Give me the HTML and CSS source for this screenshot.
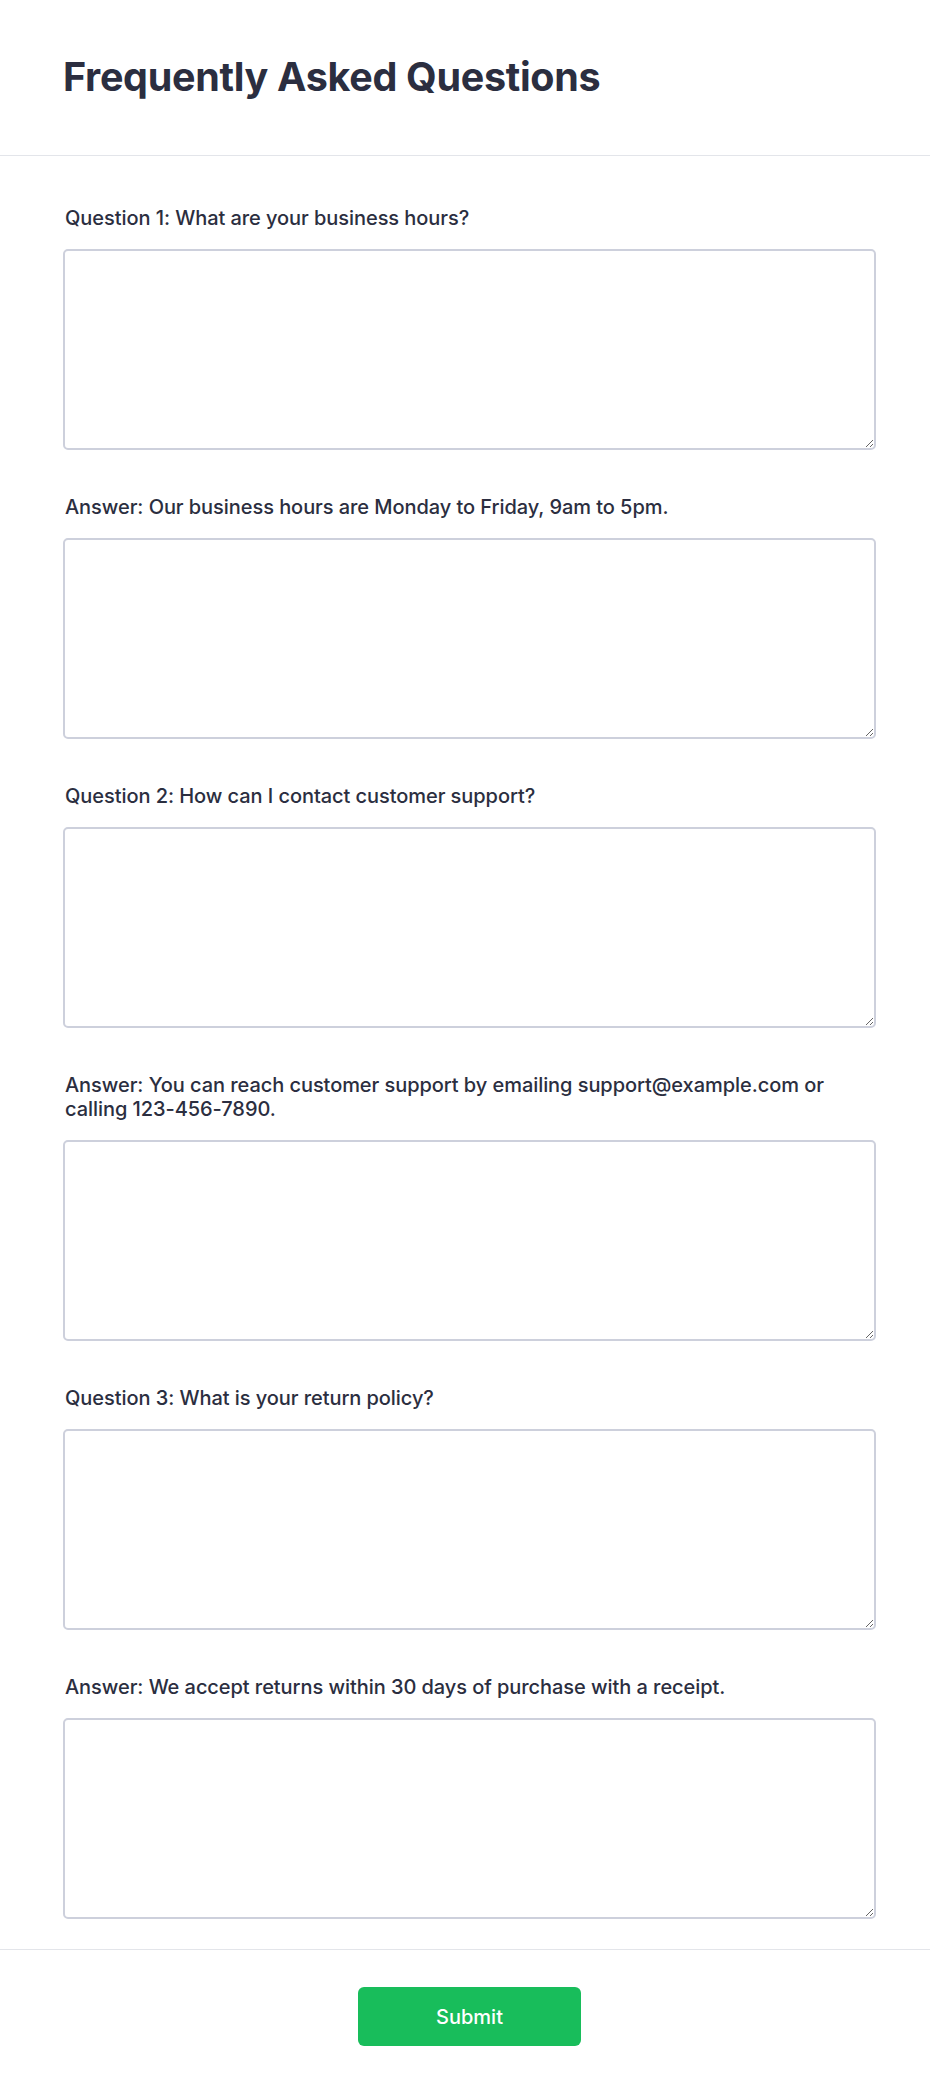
FILE: index.html
```html
<!DOCTYPE html>
<html lang="en">
<head>
    <meta charset="UTF-8">
    <title>Frequently Asked Questions</title>
    <meta name="viewport" content="width=device-width, initial-scale=1.0">
    <link rel="stylesheet" href="styles.css">
</head>
<body>
    <header class="faq-header">
        <h1>Frequently Asked Questions</h1>
    </header>
    <form class="faq-form">
        <div class="faq-field">
            <label for="q1">Question 1: What are your business hours?</label>
            <textarea id="q1"></textarea>
        </div>
        <div class="faq-field">
            <label for="a1">Answer: Our business hours are Monday to Friday, 9am to 5pm.</label>
            <textarea id="a1"></textarea>
        </div>
        <div class="faq-field">
            <label for="q2">Question 2: How can I contact customer support?</label>
            <textarea id="q2"></textarea>
        </div>
        <div class="faq-field">
            <label for="a2">Answer: You can reach customer support by emailing support@example.com or calling 123-456-7890.</label>
            <textarea id="a2"></textarea>
        </div>
        <div class="faq-field">
            <label for="q3">Question 3: What is your return policy?</label>
            <textarea id="q3"></textarea>
        </div>
        <div class="faq-field">
            <label for="a3">Answer: We accept returns within 30 days of purchase with a receipt.</label>
            <textarea id="a3"></textarea>
        </div>
    </form>
    <footer class="faq-footer">
        <button type="button" class="submit-btn">Submit</button>
    </footer>
</body>
</html>
```

FILE: styles.css
```css
:root {
    --ink: #2b2e40;
    --line: #e3e5ea;
    --field-border: #cdd0dc;
    --green: #18bd5b;
}

body {
    margin: 0;
    background: #fff;
    font-family: Inter, 'Noto Sans', sans-serif;
    color: var(--ink);
}

.faq-header {
    padding: 54px 54px 55px 63px;
    border-bottom: 1px solid var(--line);
}
.faq-header h1 {
    margin: 0;
    font-size: 39.5px;
    line-height: 46px;
    font-weight: 700;
    letter-spacing: -0.008em;
}

.faq-form {
    display: flex;
    flex-direction: column;
    gap: 45px;
    padding: 50px 54px 30px 63px;
}
.faq-field {
    display: flex;
    flex-direction: column;
    gap: 19px;
}
.faq-field label {
    font-size: 20px;
    line-height: 24px;
    font-weight: 500;
    padding-left: 2px;
    letter-spacing: -0.003em;
}
.faq-field textarea {
    box-sizing: border-box;
    width: 100%;
    height: 201px;
    margin: 0;
    border: 2px solid var(--field-border);
    border-radius: 5px;
    font-family: inherit;
    font-size: 16px;
    background: #fff;
}

/* centred within the same uneven gutters as the form */
.faq-footer {
    border-top: 1px solid var(--line);
    padding: 37px 54px 50px 63px;
    display: flex;
    justify-content: center;
}
.submit-btn {
    width: 223px;
    height: 59px;
    border: none;
    border-radius: 6px;
    background: var(--green);
    color: #fff;
    font-family: inherit;
    font-size: 20px;
    font-weight: 500;
    cursor: pointer;
}
```
